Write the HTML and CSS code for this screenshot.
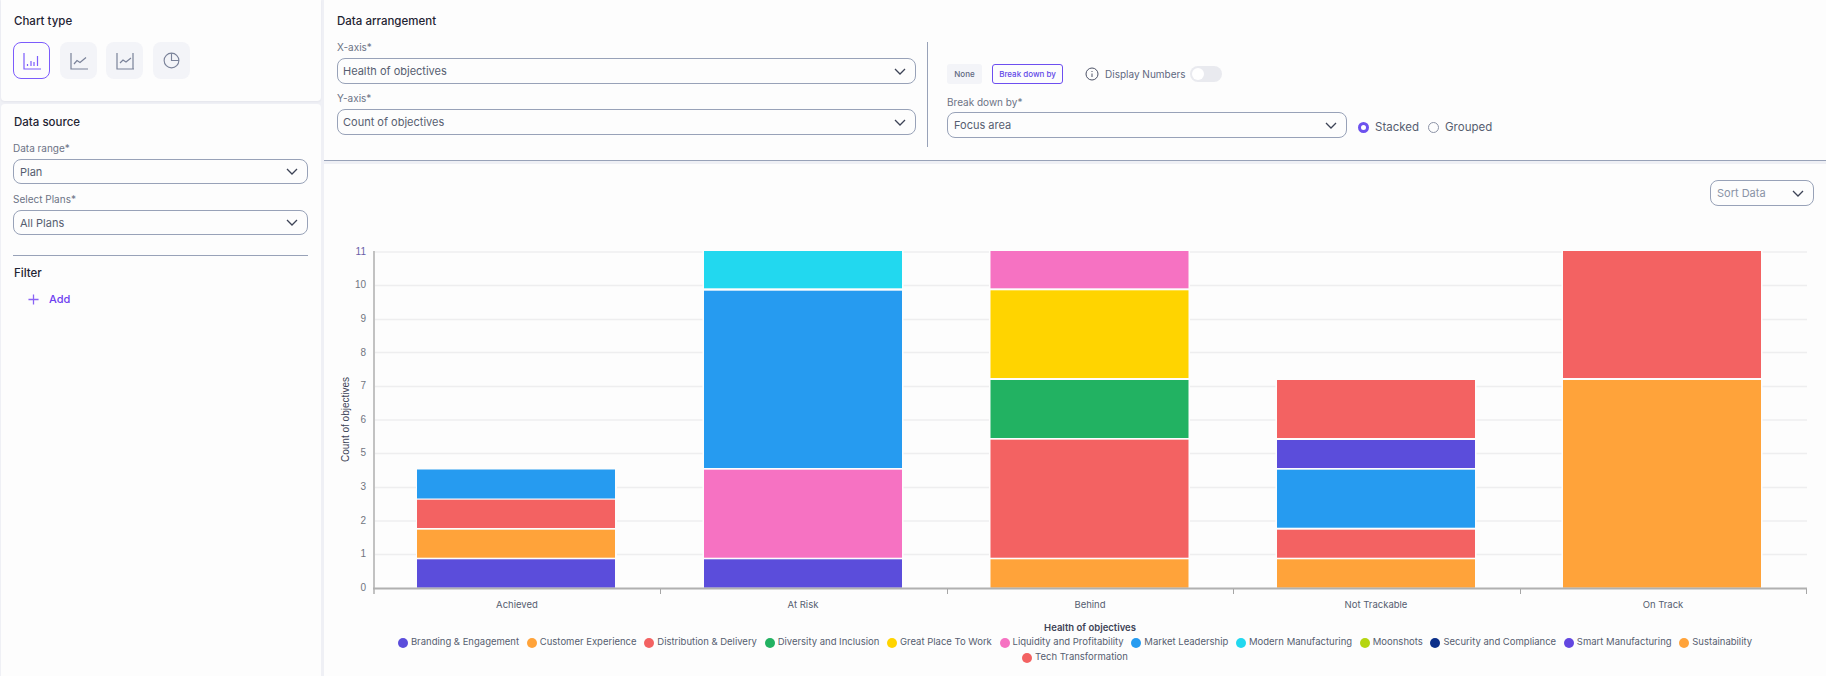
FILE: index.html
```html
<!DOCTYPE html>
<html lang="en">
<head>
<meta charset="utf-8">
<title>Chart builder</title>
<link rel="stylesheet" href="styles.css">
</head>
<body>
<aside class="sidebar">
  <section class="card card-type">
    <h2 class="title">Chart type</h2>
    <div class="types">
      <button class="type type-on"><svg viewBox="0 0 18 18" class="ticon"><path d="M1 1v16h17M4.500 14v-2M8 14V9M11 14v-4M14.500 14V4"/></svg></button>
      <button class="type type-a"><svg viewBox="0 0 18 18" class="ticon"><path d="M1 1v16h17M4 12l3-3.500 3 2 6-5"/></svg></button>
      <button class="type type-b"><svg viewBox="0 0 18 18" class="ticon"><path d="M1 1v16h17M17 1v16M4 11l3-3 3 2 5-4"/></svg></button>
      <button class="type type-c"><svg viewBox="0 0 18 18" class="ticon"><circle cx="9" cy="9" r="7.800"/><path d="M9 1.200V9h7.800"/></svg></button>
    </div>
  </section>
  <section class="card card-source">
    <h2 class="title">Data source</h2>
    <div class="field field-first">
      <label class="label">Data range*</label>
      <div class="select"><span>Plan</span><svg viewBox="0 0 12 7" class="chev"><path d="M1 1l5 5 5-5"/></svg></div>
    </div>
    <div class="field">
      <label class="label">Select Plans*</label>
      <div class="select"><span>All Plans</span><svg viewBox="0 0 12 7" class="chev"><path d="M1 1l5 5 5-5"/></svg></div>
    </div>
    <hr class="rule">
    <h2 class="title">Filter</h2>
    <div class="add"><svg viewBox="0 0 12 12" class="plus"><path d="M6 .5v11M.5 6h11"/></svg><span>Add</span></div>
  </section>
</aside>
<main class="main">
  <section class="arrange">
    <div class="axes">
      <h2 class="title">Data arrangement</h2>
      <div class="field field-first">
        <label class="label">X-axis*</label>
        <div class="select"><span>Health of objectives</span><svg viewBox="0 0 12 7" class="chev"><path d="M1 1l5 5 5-5"/></svg></div>
      </div>
      <div class="field">
        <label class="label">Y-axis*</label>
        <div class="select"><span>Count of objectives</span><svg viewBox="0 0 12 7" class="chev"><path d="M1 1l5 5 5-5"/></svg></div>
      </div>
    </div>
    <div class="breakdown">
      <div class="modes">
        <button class="mode">None</button>
        <button class="mode mode-on">Break down by</button>
        <svg viewBox="0 0 14 14" class="info"><circle cx="7" cy="7" r="6"/><path d="M7 6.500v3.500M7 4v1"/></svg>
        <span class="num-label">Display Numbers</span>
        <span class="toggle"><span class="knob"></span></span>
      </div>
      <label class="label label-bd">Break down by*</label>
      <div class="bd-row">
        <div class="select select-bd"><span>Focus area</span><svg viewBox="0 0 12 7" class="chev"><path d="M1 1l5 5 5-5"/></svg></div>
        <span class="radio radio-on"></span><span class="radio-text">Stacked</span>
        <span class="radio"></span><span class="radio-text">Grouped</span>
      </div>
    </div>
  </section>
  <section class="chart">
    <div class="sort-row">
      <div class="select select-sort"><span>Sort Data</span><svg viewBox="0 0 12 7" class="chev"><path d="M1 1l5 5 5-5"/></svg></div>
    </div>
    <svg class="plot" viewBox="324 206 1502 428">
      <g class="grid">
        <line x1="375" x2="1807" y1="252" y2="252"/>
        <line x1="375" x2="1807" y1="285.500" y2="285.500"/>
        <line x1="375" x2="1807" y1="319.500" y2="319.500"/>
        <line x1="375" x2="1807" y1="352.500" y2="352.500"/>
        <line x1="375" x2="1807" y1="386.500" y2="386.500"/>
        <line x1="375" x2="1807" y1="420" y2="420"/>
        <line x1="375" x2="1807" y1="453.500" y2="453.500"/>
        <line x1="375" x2="1807" y1="487.500" y2="487.500"/>
        <line x1="375" x2="1807" y1="521" y2="521"/>
        <line x1="375" x2="1807" y1="554.500" y2="554.500"/>
      </g>
      <g class="halo">
        <rect x="416" y="468" width="201" height="120"/>
        <rect x="702.500" y="250" width="201" height="338"/>
        <rect x="989" y="250" width="201" height="338"/>
        <rect x="1275.500" y="379" width="201" height="209"/>
        <rect x="1561.500" y="250" width="201" height="338"/>
      </g>
      <g>
        <rect class="c-blue" x="417" y="469.500" width="198" height="29"/>
        <rect class="c-red" x="417" y="499.700" width="198" height="28.300"/>
        <rect class="c-orange" x="417" y="529.700" width="198" height="28"/>
        <rect class="c-purple" x="417" y="559.300" width="198" height="28.400"/>

        <rect class="c-cyan" x="704" y="251" width="198" height="37.300"/>
        <rect class="c-blue" x="704" y="290.700" width="198" height="177.300"/>
        <rect class="c-pink" x="704" y="469.700" width="198" height="88"/>
        <rect class="c-purple" x="704" y="559.300" width="198" height="28.400"/>

        <rect class="c-pink" x="990.500" y="251" width="198" height="37.300"/>
        <rect class="c-yellow" x="990.500" y="290.300" width="198" height="87.700"/>
        <rect class="c-green" x="990.500" y="380" width="198" height="58"/>
        <rect class="c-red" x="990.500" y="439.700" width="198" height="118"/>
        <rect class="c-orange" x="990.500" y="559.300" width="198" height="28.400"/>

        <rect class="c-red" x="1277" y="380" width="198" height="58"/>
        <rect class="c-purple" x="1277" y="440" width="198" height="28"/>
        <rect class="c-blue" x="1277" y="469.700" width="198" height="58"/>
        <rect class="c-red" x="1277" y="529.700" width="198" height="28"/>
        <rect class="c-orange" x="1277" y="559.300" width="198" height="28.400"/>

        <rect class="c-red" x="1563" y="251" width="198" height="127"/>
        <rect class="c-orange" x="1563" y="380" width="198" height="207.700"/>
      </g>
      <g class="axis">
        <line class="axis-y" x1="374" x2="374" y1="251" y2="594"/>
        <line class="axis-x" x1="373" x2="1807" y1="588.500" y2="588.500"/>
        <line x1="660.500" x2="660.500" y1="589" y2="594"/>
        <line x1="947.500" x2="947.500" y1="589" y2="594"/>
        <line x1="1233.500" x2="1233.500" y1="589" y2="594"/>
        <line x1="1520.500" x2="1520.500" y1="589" y2="594"/>
        <line x1="1806.500" x2="1806.500" y1="589" y2="594"/>
      </g>
      <g class="yticks">
        <text class="tick-top" x="366" y="254.500">11</text>
        <text x="366" y="287.500">10</text>
        <text x="366" y="321.500">9</text>
        <text x="366" y="355.500">8</text>
        <text x="366" y="388.500">7</text>
        <text x="366" y="422.500">6</text>
        <text x="366" y="455.500">5</text>
        <text x="366" y="489.500">3</text>
        <text x="366" y="523.500">2</text>
        <text x="366" y="556.500">1</text>
        <text x="366" y="590.500">0</text>
      </g>
      <text class="ytitle" transform="translate(348.500 462) rotate(-90)">Count of objectives</text>
      <g class="xticks">
        <text x="517" y="608">Achieved</text>
        <text x="803" y="608">At Risk</text>
        <text x="1090" y="608">Behind</text>
        <text x="1376" y="608">Not Trackable</text>
        <text x="1663" y="608">On Track</text>
      </g>
      <text class="xtitle" x="1090" y="631">Health of objectives</text>
    </svg>
    <ul class="legend">
      <li class="item"><span class="dot bg-purple"></span>Branding &amp; Engagement</li>
      <li class="item"><span class="dot bg-orange"></span>Customer Experience</li>
      <li class="item"><span class="dot bg-red"></span>Distribution &amp; Delivery</li>
      <li class="item"><span class="dot bg-green"></span>Diversity and Inclusion</li>
      <li class="item"><span class="dot bg-yellow"></span>Great Place To Work</li>
      <li class="item"><span class="dot bg-pink"></span>Liquidity and Profitability</li>
      <li class="item"><span class="dot bg-blue"></span>Market Leadership</li>
      <li class="item"><span class="dot bg-cyan"></span>Modern Manufacturing</li>
      <li class="item"><span class="dot bg-lime"></span>Moonshots</li>
      <li class="item"><span class="dot bg-navy"></span>Security and Compliance</li>
      <li class="item"><span class="dot bg-smart"></span>Smart Manufacturing</li>
      <li class="item"><span class="dot bg-orange"></span>Sustainability</li>
      <li class="item"><span class="dot bg-red"></span>Tech Transformation</li>
    </ul>
  </section>
</main>
</body>
</html>
```
FILE: styles.css
```css
* { box-sizing: border-box; }
html, body { height: 100%; }
body {
  margin: 0;
  height: 676px;
  overflow: hidden;
  display: flex;
  gap: 3px;
  background: #eff0f5;
  font-family: Inter, "Noto Sans", sans-serif;
  color: #1f2433;
}
.sidebar { width: 321px; flex: none; display: flex; flex-direction: column; gap: 3px; padding-left: 1px; }
.card { background: #fdfdfd; }
.card-type { height: 101px; padding: 14px 13px 0; border-radius: 0 0 4px 4px; box-shadow: 0 1px 2px rgba(30,40,70,.05); }
.card-source { flex: 1; padding: 11px 13px 0 12px; border-radius: 4px 4px 0 0; }
.card-source .title { padding-left: 1px; }
.title { margin: 0; font-size: 11.500px; line-height: 15px; font-weight: 500; color: #1f2433; }
.types { display: flex; margin: 13px 0 0 -1px; }
.type { width: 37px; height: 37px; margin: 0 10px 0 0; padding: 0; border: 0; border-radius: 8px; background: #f3f4f8; display: flex; align-items: center; justify-content: center; }
.type-a { margin-right: 9px; }
.type-on { border: 1px solid #7c5cfc; background: #fdfdfd; }
.ticon { width: 18px; height: 18px; fill: none; stroke: #7a8299; stroke-width: 1.200; }
.type-on .ticon { stroke: #7c5cfc; }
.type-c .ticon { width: 17px; height: 17px; }

.field { margin-top: 8px; }
.field-first { margin-top: 11px; }
.label { display: block; font-size: 10px; line-height: 14px; color: #6c7385; margin-bottom: 4px; }
.select {
  height: 26px;
  border: 1px solid #98a2b8;
  border-radius: 8px;
  background: #fdfdfd;
  display: flex;
  align-items: center;
  justify-content: space-between;
  padding: 0 9px 0 6px;
  font-size: 11px;
  color: #565d70;
}
.sidebar .select { height: 25px; }
.chev { width: 12px; height: 7px; fill: none; stroke: #3d4356; stroke-width: 1.300; flex: none; }
.rule { border: 0; border-top: 1px solid #98a2b8; margin: 20px 0 10px; }
.add { display: flex; align-items: center; margin: 11px 0 0 8px; font-size: 11px; font-weight: 500; color: #6d3ff0; }
.plus { width: 11px; height: 11px; fill: none; stroke: #8a63f5; stroke-width: 1.400; margin: 0 10px 0 7px; }

.main { flex: 1; min-width: 0; display: flex; flex-direction: column; gap: 3px; }
.arrange { height: 161px; flex: none; display: flex; background: #fdfdfd; border-bottom: 1px solid #98a2b8; padding: 14px 0 0 13px; }
.axes { width: 579px; flex: none; }
.axes .select { padding-left: 5px; }
.axes .field { margin-top: 7px; }
.axes .field-first { margin-top: 11px; }
.breakdown { margin: 28px 0 13px 11px; flex: 1; height: 105px; border-left: 1px solid #98a2b8; padding: 22px 0 0 19px; }
.modes { display: flex; align-items: center; height: 20px; }
.mode { height: 20px; padding: 0; margin: 0; border: 0; border-radius: 3px; background: #f3f4f8; font-family: inherit; font-size: 8px; font-weight: 500; color: #5f6880; width: 35px; }
.mode-on { width: 71px; margin-left: 10px; background: #fdfdfd; border: 1px solid #6d4ff0; color: #6248e8; }
.info { width: 14px; height: 14px; margin-left: 22px; fill: none; stroke: #4c5266; stroke-width: 1; }
.num-label { margin-left: 6px; font-size: 10px; color: #5f6880; }
.toggle { width: 32px; height: 16px; margin-left: 4px; border-radius: 8px; background: #e9eaef; display: flex; align-items: center; padding-left: 2px; }
.knob { width: 12px; height: 12px; border-radius: 50%; background: #fff; }
.label-bd { margin: 11px 0 3px; }
.bd-row { display: flex; align-items: center; font-size: 11.500px; color: #565d70; }
.select-bd { width: 400px; flex: none; margin-right: 11px; font-size: 11px; }
.radio { width: 11px; height: 11px; flex: none; border-radius: 50%; border: 1px solid #8c93a6; margin-top: 4px; margin-right: 6px; }
.radio-on { border: 3px solid #6d52ee; background: #fff; }
.radio-text { margin-top: 4px; margin-right: 9px; }

.chart { flex: 1; background: #fdfdfd; min-height: 0; }
.sort-row { display: flex; justify-content: flex-end; padding: 16px 12px 0 0; }
.select-sort { width: 104px; color: #8a93a6; }
.plot { display: block; width: 1502px; height: 428px; }
.grid line { stroke: #eeeeef; stroke-width: 1.500; }
.halo rect { fill: #fdfdfd; }
.axis line { stroke: #a6a6a6; stroke-width: 1; }
.axis .axis-y { stroke: #c2c2c2; stroke-width: 2; }
.axis .axis-x { stroke: #b0b0b0; stroke-width: 2; }
.yticks text { font-family: "Liberation Sans", Arial, sans-serif; font-size: 10px; text-anchor: end; fill: #71757f; }
.yticks .tick-top { fill: #6a5fa8; }
.ytitle { font-family: "Liberation Sans", Arial, sans-serif; font-size: 10px; fill: #3d4356; }
.xticks text { font-family: Inter, sans-serif; font-size: 9.500px; text-anchor: middle; fill: #565d70; }
.xtitle { font-family: Inter, sans-serif; font-size: 9.500px; font-weight: 600; text-anchor: middle; fill: #3d4356; }
.c-blue { fill: #269bf0; }
.c-red { fill: #f36262; }
.c-orange { fill: #ffa33a; }
.c-purple { fill: #5b4ddb; }
.c-cyan { fill: #22d8ef; }
.c-pink { fill: #f672c2; }
.c-yellow { fill: #ffd400; }
.c-green { fill: #22b262; }

.legend { list-style: none; margin: 0 auto; padding: 0; width: 1365px; display: flex; flex-wrap: wrap; justify-content: center; column-gap: 7.700px; row-gap: .5px; }
.item { display: flex; align-items: center; height: 14.500px; font-size: 9.500px; color: #565d70; white-space: nowrap; }
.dot { width: 10px; height: 10px; border-radius: 50%; margin: 3px 3px 0 0; flex: none; }
.bg-purple { background: #5b4ddb; }
.bg-orange { background: #ffa33a; }
.bg-red { background: #f36262; }
.bg-green { background: #22b262; }
.bg-yellow { background: #ffd400; }
.bg-pink { background: #f672c2; }
.bg-blue { background: #269bf0; }
.bg-cyan { background: #22d8ef; }
.bg-lime { background: #b5d510; }
.bg-navy { background: #0b2f8a; }
.bg-smart { background: #6347e0; }
```
